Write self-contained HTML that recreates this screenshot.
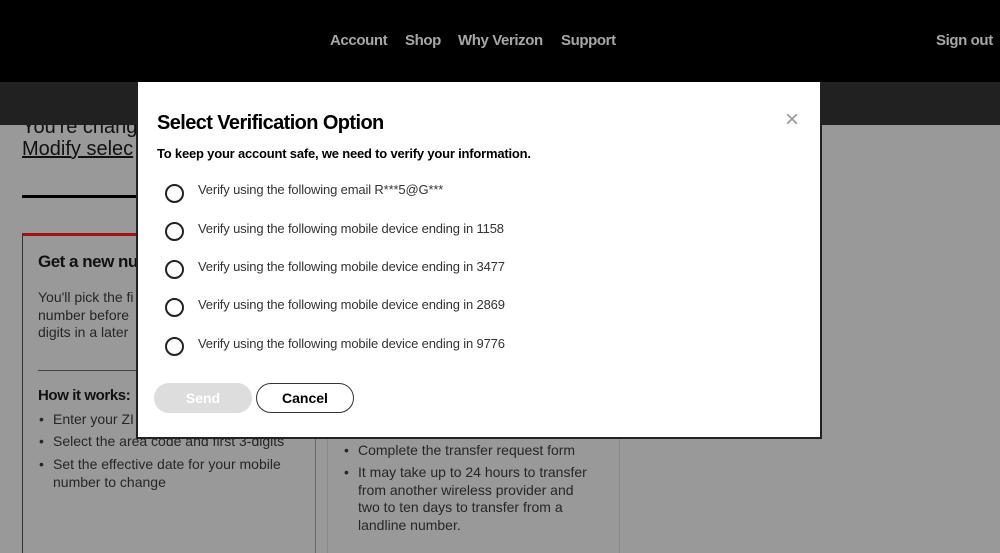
<!DOCTYPE html>
<html><head><style>
*{margin:0;padding:0;box-sizing:border-box}
body{width:1000px;height:551px;overflow:hidden;background:#999;font-family:"Liberation Sans",Arial,sans-serif;position:relative}
.a{position:absolute}
.hdr{left:0;top:0;width:1000px;height:82px;background:#000}
.nav{top:31px;font-size:15px;font-weight:bold;color:#a6a6a6;letter-spacing:-0.4px}
.bar{left:0;top:82px;width:1000px;height:43px;background:#212121}
.t{color:#262626;font-size:14px}
.bul{color:#262626;font-size:14px;line-height:18px}
.bul b{position:absolute;left:-14px;font-weight:normal}
.modal{left:136px;top:82px;width:686px;height:357px;background:#fff;border:2px solid #222;border-top:none}
.radio{width:19px;height:19px;border:2px solid #222;border-radius:50%}
.opt{font-size:13px;color:#333;letter-spacing:-0.15px}
</style></head><body>
<div class="a hdr"></div>
<div class="a nav" style="left:330px;top:32px">Account</div>
<div class="a nav" style="left:405px;top:32px">Shop</div>
<div class="a nav" style="left:458px;top:32px">Why Verizon</div>
<div class="a nav" style="left:561px;top:32px">Support</div>
<div class="a nav" style="left:936px;top:32px">Sign out</div>
<div class="a bar"></div>
<div class="a" style="left:22px;font-size:20px;color:#111;height:12px;overflow:hidden;line-height:20px;width:120px;top:125px;"><div style="margin-top:-8px">You're chang</div></div>
<div class="a" style="left:22px;top:138px;font-size:20px;color:#111;text-decoration:underline">Modify selec</div>
<div class="a" style="left:22px;top:195px;width:120px;height:3px;background:#000"></div>
<div class="a" style="left:22px;top:233px;width:294px;height:320px;border-left:1px solid #333;border-right:1px solid #666;border-top:3px solid #a3121a"></div>
<div class="a" style="left:327px;top:233px;width:293px;height:320px;border-left:1px solid #888;border-right:1px solid #888"></div>
<div class="a" style="left:38px;top:252px;font-size:17px;font-weight:bold;color:#111;letter-spacing:-0.5px">Get a new nu</div>
<div class="a t" style="left:38px;top:289px;line-height:17.5px">You'll pick the fi<br>number before<br>digits in a later</div>
<div class="a" style="left:38px;top:370px;width:260px;height:1px;background:#444"></div>
<div class="a" style="left:38px;top:387px;font-size:15px;font-weight:bold;color:#111;letter-spacing:-0.4px">How it works:</div>
<div class="a bul" style="left:53px;top:410px"><b>•</b>Enter your ZI</div>
<div class="a bul" style="left:53px;top:432px"><b>•</b>Select the area code and first 3-digits</div>
<div class="a bul" style="left:53px;top:455px"><b>•</b>Set the effective date for your mobile<br>number to change</div>
<div class="a bul" style="left:358px;top:441px"><b>•</b>Complete the transfer request form</div>
<div class="a bul" style="left:358px;top:464px;line-height:17.5px"><b>•</b>It may take up to 24 hours to transfer<br>from another wireless provider and<br>two to ten days to transfer from a<br>landline number.</div>

<div class="a modal"></div>
<div class="a" style="left:157px;top:112px;font-size:20px;font-weight:bold;color:#000;letter-spacing:-0.6px">Select Verification Option</div>
<div class="a" style="left:785px;top:106px;font-size:24px;color:#999;font-weight:300">×</div>
<div class="a" style="left:157px;top:146px;font-size:13px;font-weight:bold;color:#000;letter-spacing:-0.2px">To keep your account safe, we need to verify your information.</div>
<div class="a radio" style="left:165px;top:184px"></div><div class="a opt" style="left:198px;top:182px">Verify using the following email R***5@G***</div>
<div class="a radio" style="left:165px;top:222px"></div><div class="a opt" style="left:198px;top:221px">Verify using the following mobile device ending in 1158</div>
<div class="a radio" style="left:165px;top:260px"></div><div class="a opt" style="left:198px;top:259px">Verify using the following mobile device ending in 3477</div>
<div class="a radio" style="left:165px;top:298px"></div><div class="a opt" style="left:198px;top:297px">Verify using the following mobile device ending in 2869</div>
<div class="a radio" style="left:165px;top:337px"></div><div class="a opt" style="left:198px;top:336px">Verify using the following mobile device ending in 9776</div>
<div class="a" style="left:154px;top:383px;width:98px;height:30px;border-radius:15px;background:#ddd;color:#fff;font-weight:bold;font-size:14px;text-align:center;line-height:30px">Send</div>
<div class="a" style="left:256px;top:383px;width:98px;height:30px;border-radius:15px;border:1px solid #333;background:#fff;color:#000;font-weight:bold;font-size:14px;text-align:center;line-height:28px">Cancel</div>
</body></html>
